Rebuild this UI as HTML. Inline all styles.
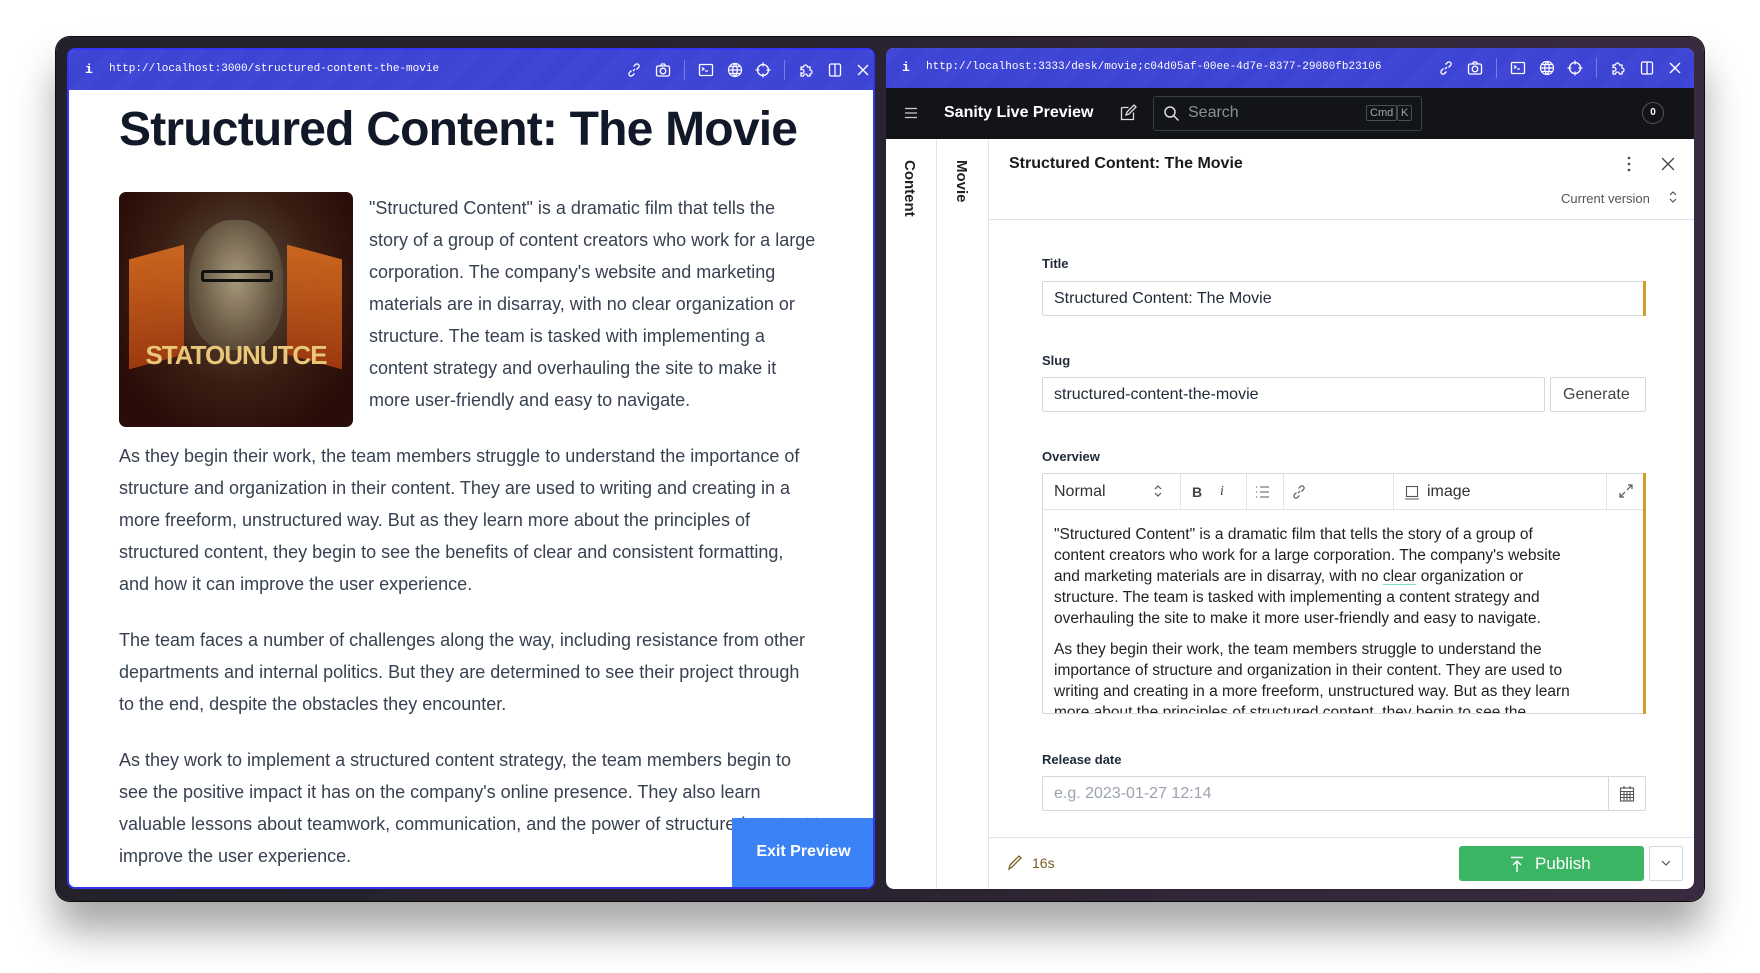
<!DOCTYPE html>
<html><head><meta charset="utf-8">
<style>
*{box-sizing:border-box;margin:0;padding:0}
body{width:1760px;height:973px;background:#fff;position:relative;overflow:hidden;font-family:"Liberation Sans",Arial,sans-serif}
.abs{position:absolute}
.frame{left:56px;top:37px;width:1648px;height:864px;border-radius:14px;background:linear-gradient(90deg,#24212b,#2a2331 50%,#3a2a40);box-shadow:0 30px 40px rgba(0,0,0,.35),0 0 0 1px #111}
.urlbar{height:40px;background:repeating-linear-gradient(135deg,#4046d6 0 14px,#3d43d2 14px 28px);color:#fff;font-family:"Liberation Mono",monospace;font-size:11px}
.urlbar .i{position:absolute;left:16px;top:12px;font-weight:bold;font-size:13px}
.urlbar .u{position:absolute;left:40px;top:13px}
.ico{position:absolute;top:12px;width:16px;height:16px}
.sep{position:absolute;top:10px;width:1px;height:20px;background:rgba(255,255,255,.3)}
.lp{left:67px;top:48px;width:808px;height:841px;background:#fff;border:2px solid #3336f0;border-radius:8px;overflow:hidden}
.lp p{font-size:18px;line-height:32px;color:#374151;white-space:nowrap}
.rp{left:886px;top:48px;width:808px;height:841px;background:#fff;border-radius:8px;overflow:hidden}
.lbl{font-size:13px;font-weight:bold;color:#1f2937}
.inp{border:1px solid #d4d7dd;border-radius:2px;font-size:16px;color:#1f2937;padding-left:11px;line-height:33px}
</style></head><body>
<div class="abs frame"></div>

<!-- LEFT PANE -->
<div class="abs lp">
  <div class="urlbar abs" style="left:0;top:0;width:808px">
    <span class="i">i</span><span class="u">http://localhost:3000/structured-content-the-movie</span>
    <svg class="ico" style="left:557px" viewBox="0 0 16 16" fill="none" stroke="#fff" stroke-width="1.3"><path d="M7 9l2-2M5.5 8.5l-2 2a2 2 0 003 3l2-2M10.5 7.5l2-2a2 2 0 00-3-3l-2 2"/></svg>
    <svg class="ico" style="left:586px" viewBox="0 0 16 16" fill="none" stroke="#fff" stroke-width="1.3"><rect x="1.5" y="4" width="13" height="10" rx="1.5"/><circle cx="8" cy="9" r="2.8"/><path d="M5.5 4l1-2h3l1 2"/></svg>
    <div class="sep" style="left:615px"></div>
    <svg class="ico" style="left:629px" viewBox="0 0 16 16" fill="none" stroke="#fff" stroke-width="1.3"><rect x="1.5" y="2.5" width="13" height="11" rx="1"/><path d="M4 5.5l2 1.5-2 1.5M7 9h3"/></svg>
    <svg class="ico" style="left:658px" viewBox="0 0 16 16" fill="none" stroke="#fff" stroke-width="1.2"><circle cx="8" cy="8" r="6.5"/><path d="M1.5 8h13M8 1.5c-3 3.5-3 9.5 0 13M8 1.5c3 3.5 3 9.5 0 13M3 4.5h10M3 11.5h10"/></svg>
    <svg class="ico" style="left:686px" viewBox="0 0 16 16" fill="none" stroke="#fff" stroke-width="1.3"><circle cx="8" cy="8" r="5.5"/><path d="M8 0.5v4M8 11.5v4M0.5 8h4M11.5 8h4"/></svg>
    <div class="sep" style="left:715px"></div>
    <svg class="ico" style="left:729px" viewBox="0 0 16 16" fill="none" stroke="#fff" stroke-width="1.3"><path d="M3 5h2.5a2 2 0 114 0H12v3a2 2 0 110 4v2H9.5a2 2 0 10-4 0H3v-3a2 2 0 100-3.5z"/></svg>
    <svg class="ico" style="left:758px" viewBox="0 0 16 16" fill="none" stroke="#fff" stroke-width="1.3"><rect x="2.5" y="2" width="11" height="12" rx="1.5"/><path d="M8 2v12"/></svg>
    <svg class="ico" style="left:786px" viewBox="0 0 16 16" fill="none" stroke="#fff" stroke-width="1.4"><path d="M3 3l10 10M13 3L3 13"/></svg>
  </div>
  <div class="abs" style="left:50px;top:52px;font-size:48px;font-weight:bold;color:#111827;letter-spacing:-0.8px;white-space:nowrap">Structured Content: The Movie</div>
  <div class="abs" style="left:50px;top:142px;width:234px;height:235px;border-radius:7px;overflow:hidden;background:radial-gradient(ellipse at 50% 40%,#7a6a55 0,#4d3a2c 25%,#3a1d12 50%,#2a0d08 80%)">
    <div class="abs" style="left:10px;top:60px;width:55px;height:110px;background:linear-gradient(180deg,#e07020,#b04010);transform:skewY(-15deg);opacity:.85"></div>
    <div class="abs" style="left:168px;top:60px;width:55px;height:110px;background:linear-gradient(180deg,#e07020,#b04010);transform:skewY(15deg);opacity:.85"></div>
    <div class="abs" style="left:70px;top:28px;width:94px;height:130px;border-radius:45% 45% 40% 40%;background:radial-gradient(ellipse at 50% 45%,#a89a7c,#5a4a38 70%)"></div>
    <div class="abs" style="left:82px;top:78px;width:72px;height:12px;border:3px solid #111;border-radius:3px"></div>
    <div class="abs" style="left:0;top:148px;width:234px;text-align:center;color:#e8c878;font-weight:bold;font-size:26px;letter-spacing:-1px">STATOUNUTCE</div>
  </div>
  <div class="abs" style="left:300px;top:142px"><p>"Structured Content" is a dramatic film that tells the<br>story of a group of content creators who work for a large<br>corporation. The company's website and marketing<br>materials are in disarray, with no clear organization or<br>structure. The team is tasked with implementing a<br>content strategy and overhauling the site to make it<br>more user-friendly and easy to navigate.</p></div>
  <div class="abs" style="left:50px;top:390px">
    <p>As they begin their work, the team members struggle to understand the importance of<br>structure and organization in their content. They are used to writing and creating in a<br>more freeform, unstructured way. But as they learn more about the principles of<br>structured content, they begin to see the benefits of clear and consistent formatting,<br>and how it can improve the user experience.</p>
    <p style="margin-top:24px">The team faces a number of challenges along the way, including resistance from other<br>departments and internal politics. But they are determined to see their project through<br>to the end, despite the obstacles they encounter.</p>
    <p style="margin-top:24px">As they work to implement a structured content strategy, the team members begin to<br>see the positive impact it has on the company's online presence. They also learn<br>valuable lessons about teamwork, communication, and the power of structured content to<br>improve the user experience.</p>
  </div>
  <div class="abs" style="left:663px;top:768px;width:143px;height:80px;background:#3b82f6;color:#fff;font-weight:bold;font-size:16px;text-align:center;line-height:68px">Exit Preview</div>
</div>

<!-- RIGHT PANE -->
<div class="abs rp">
  <div class="urlbar abs" style="left:0;top:0;width:808px">
    <span class="i">i</span><span class="u">http://localhost:3333/desk/movie;c04d05af-00ee-4d7e-8377-29080fb23106</span>
    <svg class="ico" style="left:552px" viewBox="0 0 16 16" fill="none" stroke="#fff" stroke-width="1.3"><path d="M7 9l2-2M5.5 8.5l-2 2a2 2 0 003 3l2-2M10.5 7.5l2-2a2 2 0 00-3-3l-2 2"/></svg>
    <svg class="ico" style="left:581px" viewBox="0 0 16 16" fill="none" stroke="#fff" stroke-width="1.3"><rect x="1.5" y="4" width="13" height="10" rx="1.5"/><circle cx="8" cy="9" r="2.8"/><path d="M5.5 4l1-2h3l1 2"/></svg>
    <div class="sep" style="left:610px"></div>
    <svg class="ico" style="left:624px" viewBox="0 0 16 16" fill="none" stroke="#fff" stroke-width="1.3"><rect x="1.5" y="2.5" width="13" height="11" rx="1"/><path d="M4 5.5l2 1.5-2 1.5M7 9h3"/></svg>
    <svg class="ico" style="left:653px" viewBox="0 0 16 16" fill="none" stroke="#fff" stroke-width="1.2"><circle cx="8" cy="8" r="6.5"/><path d="M1.5 8h13M8 1.5c-3 3.5-3 9.5 0 13M8 1.5c3 3.5 3 9.5 0 13M3 4.5h10M3 11.5h10"/></svg>
    <svg class="ico" style="left:681px" viewBox="0 0 16 16" fill="none" stroke="#fff" stroke-width="1.3"><circle cx="8" cy="8" r="5.5"/><path d="M8 0.5v4M8 11.5v4M0.5 8h4M11.5 8h4"/></svg>
    <div class="sep" style="left:710px"></div>
    <svg class="ico" style="left:724px" viewBox="0 0 16 16" fill="none" stroke="#fff" stroke-width="1.3"><path d="M3 5h2.5a2 2 0 114 0H12v3a2 2 0 110 4v2H9.5a2 2 0 10-4 0H3v-3a2 2 0 100-3.5z"/></svg>
    <svg class="ico" style="left:753px" viewBox="0 0 16 16" fill="none" stroke="#fff" stroke-width="1.3"><rect x="2.5" y="2" width="11" height="12" rx="1.5"/><path d="M8 2v12"/></svg>
    <svg class="ico" style="left:781px" viewBox="0 0 16 16" fill="none" stroke="#fff" stroke-width="1.4"><path d="M3 3l10 10M13 3L3 13"/></svg>
  </div>
  <!-- navbar -->
  <div class="abs" style="left:0;top:40px;width:808px;height:51px;background:#131418"></div>
  <svg class="abs" style="left:18px;top:58px" width="14" height="14" viewBox="0 0 14 14" stroke="#ccc" stroke-width="1.2"><path d="M1 2.5h12M1 7h12M1 11.5h12"/></svg>
  <div class="abs" style="left:58px;top:56px;color:#fff;font-weight:bold;font-size:16px">Sanity Live Preview</div>
  <svg class="abs" style="left:233px;top:56px" width="18" height="18" viewBox="0 0 18 18" fill="none" stroke="#ddd" stroke-width="1.3"><path d="M2.5 3.5h7M2.5 3.5v12h12v-7"/><path d="M7 11l1-3 7-7 2 2-7 7z"/></svg>
  <div class="abs" style="left:267px;top:48px;width:269px;height:35px;border:1px solid #3a3d45;border-radius:3px"></div>
  <svg class="abs" style="left:277px;top:57px" width="17" height="17" viewBox="0 0 17 17" fill="none" stroke="#ddd" stroke-width="1.5"><circle cx="7" cy="7" r="5"/><path d="M10.5 10.5l5 5"/></svg>
  <div class="abs" style="left:302px;top:56px;color:#8a8f98;font-size:16px">Search</div>
  <div class="abs" style="left:480px;top:57px;border:1px solid #4a4d55;border-radius:2px;color:#9aa;font-size:11px;padding:1px 3px">Cmd</div>
  <div class="abs" style="left:511px;top:57px;border:1px solid #4a4d55;border-radius:2px;color:#9aa;font-size:11px;padding:1px 3px">K</div>
  <div class="abs" style="left:756px;top:54px;width:22px;height:22px;border:1px solid #555;border-radius:50%;color:#fff;font-size:10px;font-weight:bold;text-align:center;line-height:20px">0</div>
  <!-- columns -->
  <div class="abs" style="left:50px;top:91px;width:1px;height:750px;background:#e2e4e8"></div>
  <div class="abs" style="left:102px;top:91px;width:1px;height:750px;background:#e2e4e8"></div>
  <div class="abs" style="left:12px;top:112px;transform-origin:0 0;transform:rotate(90deg) translateY(-20px);font-size:15px;font-weight:bold;color:#222;white-space:nowrap">Content</div>
  <div class="abs" style="left:64px;top:112px;transform-origin:0 0;transform:rotate(90deg) translateY(-20px);font-size:15px;font-weight:bold;color:#222;white-space:nowrap">Movie</div>
  <div class="abs" style="left:123px;top:107px;font-size:16px;font-weight:bold;color:#1a1a1a">Structured Content: The Movie</div>
  <svg class="abs" style="left:740px;top:107px" width="6" height="18" viewBox="0 0 6 18" fill="#444"><circle cx="3" cy="3" r="1.3"/><circle cx="3" cy="9" r="1.3"/><circle cx="3" cy="15" r="1.3"/></svg>
  <svg class="abs" style="left:775px;top:109px" width="14" height="14" viewBox="0 0 14 14" stroke="#444" stroke-width="1.3"><path d="M1 1l12 12M13 1L1 13"/></svg>
  <div class="abs" style="left:675px;top:143px;font-size:13px;color:#555">Current version</div>
  <svg class="abs" style="left:782px;top:141px" width="10" height="16" viewBox="0 0 10 16" fill="none" stroke="#555" stroke-width="1.2"><path d="M2 6l3-3 3 3M2 10l3 3 3-3"/></svg>
  <div class="abs" style="left:102px;top:171px;width:706px;height:1px;background:#e2e4e8"></div>
  <!-- fields -->
  <div class="abs lbl" style="left:156px;top:208px">Title</div>
  <div class="abs inp" style="left:156px;top:233px;width:604px;height:35px">Structured Content: The Movie</div>
  <div class="abs" style="left:757px;top:233px;width:3px;height:35px;background:#d0a020"></div>
  <div class="abs lbl" style="left:156px;top:305px">Slug</div>
  <div class="abs inp" style="left:156px;top:329px;width:503px;height:35px">structured-content-the-movie</div>
  <div class="abs inp" style="left:664px;top:329px;width:96px;height:35px;color:#444;padding-left:12px">Generate</div>
  <div class="abs lbl" style="left:156px;top:401px">Overview</div>
  <div class="abs" style="left:156px;top:425px;width:604px;height:241px;border:1px solid #d4d7dd;border-radius:2px;overflow:hidden">
    <div class="abs" style="left:0;top:35px;width:604px;height:1px;background:#e2e4e8"></div>
    <div class="abs" style="left:11px;top:9px;font-size:16px;color:#333">Normal</div>
    <svg class="abs" style="left:110px;top:9px" width="10" height="16" viewBox="0 0 10 16" fill="none" stroke="#555" stroke-width="1.2"><path d="M2 6l3-3 3 3M2 10l3 3 3-3"/></svg>
    <div class="abs" style="left:137px;top:0;width:1px;height:35px;background:#e2e4e8"></div>
    <div class="abs" style="left:149px;top:10px;font-size:14px;font-weight:bold;color:#444">B</div>
    <div class="abs" style="left:177px;top:10px;font-size:14px;font-style:italic;color:#444;font-family:'Liberation Serif'">i</div>
    <div class="abs" style="left:203px;top:0;width:1px;height:35px;background:#e2e4e8"></div>
    <svg class="abs" style="left:211px;top:10px" width="16" height="16" viewBox="0 0 16 16" fill="none" stroke="#555" stroke-width="1.1"><path d="M6 3h9M6 8h9M6 13h9M2 3h1M2 8h1M2 13h1"/></svg>
    <div class="abs" style="left:240px;top:0;width:1px;height:35px;background:#e2e4e8"></div>
    <svg class="abs" style="left:248px;top:10px" width="16" height="16" viewBox="0 0 16 16" fill="none" stroke="#555" stroke-width="1.2"><path d="M7 9l2-2M5.5 8.5l-2 2a2 2 0 003 3l2-2M10.5 7.5l2-2a2 2 0 00-3-3l-2 2"/></svg>
    <div class="abs" style="left:350px;top:0;width:1px;height:35px;background:#e2e4e8"></div>
    <svg class="abs" style="left:362px;top:10px" width="14" height="16" viewBox="0 0 14 16" fill="none" stroke="#555" stroke-width="1.1"><rect x="1.5" y="2.5" width="11" height="10"/><path d="M0 15h14"/></svg>
    <div class="abs" style="left:384px;top:9px;font-size:16px;color:#333">image</div>
    <div class="abs" style="left:563px;top:0;width:1px;height:35px;background:#e2e4e8"></div>
    <svg class="abs" style="left:576px;top:10px" width="14" height="14" viewBox="0 0 14 14" fill="none" stroke="#555" stroke-width="1.2"><path d="M8 6l5-5M9 1h4v4M6 8l-5 5M1 9v4h4"/></svg>
    <div class="abs" style="left:11px;top:50px;font-size:15.5px;line-height:21px;color:#222;white-space:nowrap">"Structured Content" is a dramatic film that tells the story of a group of<br>content creators who work for a large corporation. The company's website<br>and marketing materials are in disarray, with no <span style="text-decoration:underline;text-decoration-color:#7ee0c8;text-underline-offset:3px">clear</span> organization or<br>structure. The team is tasked with implementing a content strategy and<br>overhauling the site to make it more user-friendly and easy to navigate.<div style="height:10px"></div>As they begin their work, the team members struggle to understand the<br>importance of structure and organization in their content. They are used to<br>writing and creating in a more freeform, unstructured way. But as they learn<br>more about the principles of structured content, they begin to see the</div>
  </div>
  <div class="abs" style="left:757px;top:425px;width:3px;height:241px;background:#d0a020"></div>
  <div class="abs lbl" style="left:156px;top:704px">Release date</div>
  <div class="abs inp" style="left:156px;top:728px;width:604px;height:35px;color:#9ca3af">e.g. 2023-01-27 12:14</div>
  <div class="abs" style="left:722px;top:728px;width:1px;height:35px;background:#d4d7dd"></div>
  <svg class="abs" style="left:733px;top:737px" width="16" height="17" viewBox="0 0 16 17" fill="none" stroke="#555" stroke-width="1.1"><rect x="1.5" y="3" width="13" height="13"/><path d="M1.5 6.5h13M1.5 9.5h13M1.5 12.5h13M5 6.5v9.5M8 6.5v9.5M11 6.5v9.5M5 1v3M11 1v3"/></svg>
  <!-- footer -->
  <div class="abs" style="left:102px;top:789px;width:706px;height:1px;background:#e2e4e8"></div>
  <svg class="abs" style="left:121px;top:806px" width="16" height="17" viewBox="0 0 16 17" fill="none" stroke="#7a6020" stroke-width="1.3"><path d="M2 15l1-4 9-9 2 2-9 9z"/></svg>
  <div class="abs" style="left:146px;top:807px;font-size:14px;color:#7a6020">16s</div>
  <div class="abs" style="left:573px;top:798px;width:185px;height:35px;background:#3ab564;border-radius:3px;color:#fff;font-size:17px;line-height:35px;padding-left:76px">Publish</div>
  <svg class="abs" style="left:624px;top:808px" width="14" height="17" viewBox="0 0 14 17" fill="none" stroke="#fff" stroke-width="1.4"><path d="M1 1.5h12M7 16V5M3 9l4-4 4 4"/></svg>
  <div class="abs" style="left:763px;top:798px;width:34px;height:35px;border:1px solid #d4d7dd;border-radius:2px"></div>
  <svg class="abs" style="left:775px;top:812px" width="10" height="7" viewBox="0 0 10 7" fill="none" stroke="#555" stroke-width="1.2"><path d="M1 1l4 4 4-4"/></svg>
</div>
</body></html>
